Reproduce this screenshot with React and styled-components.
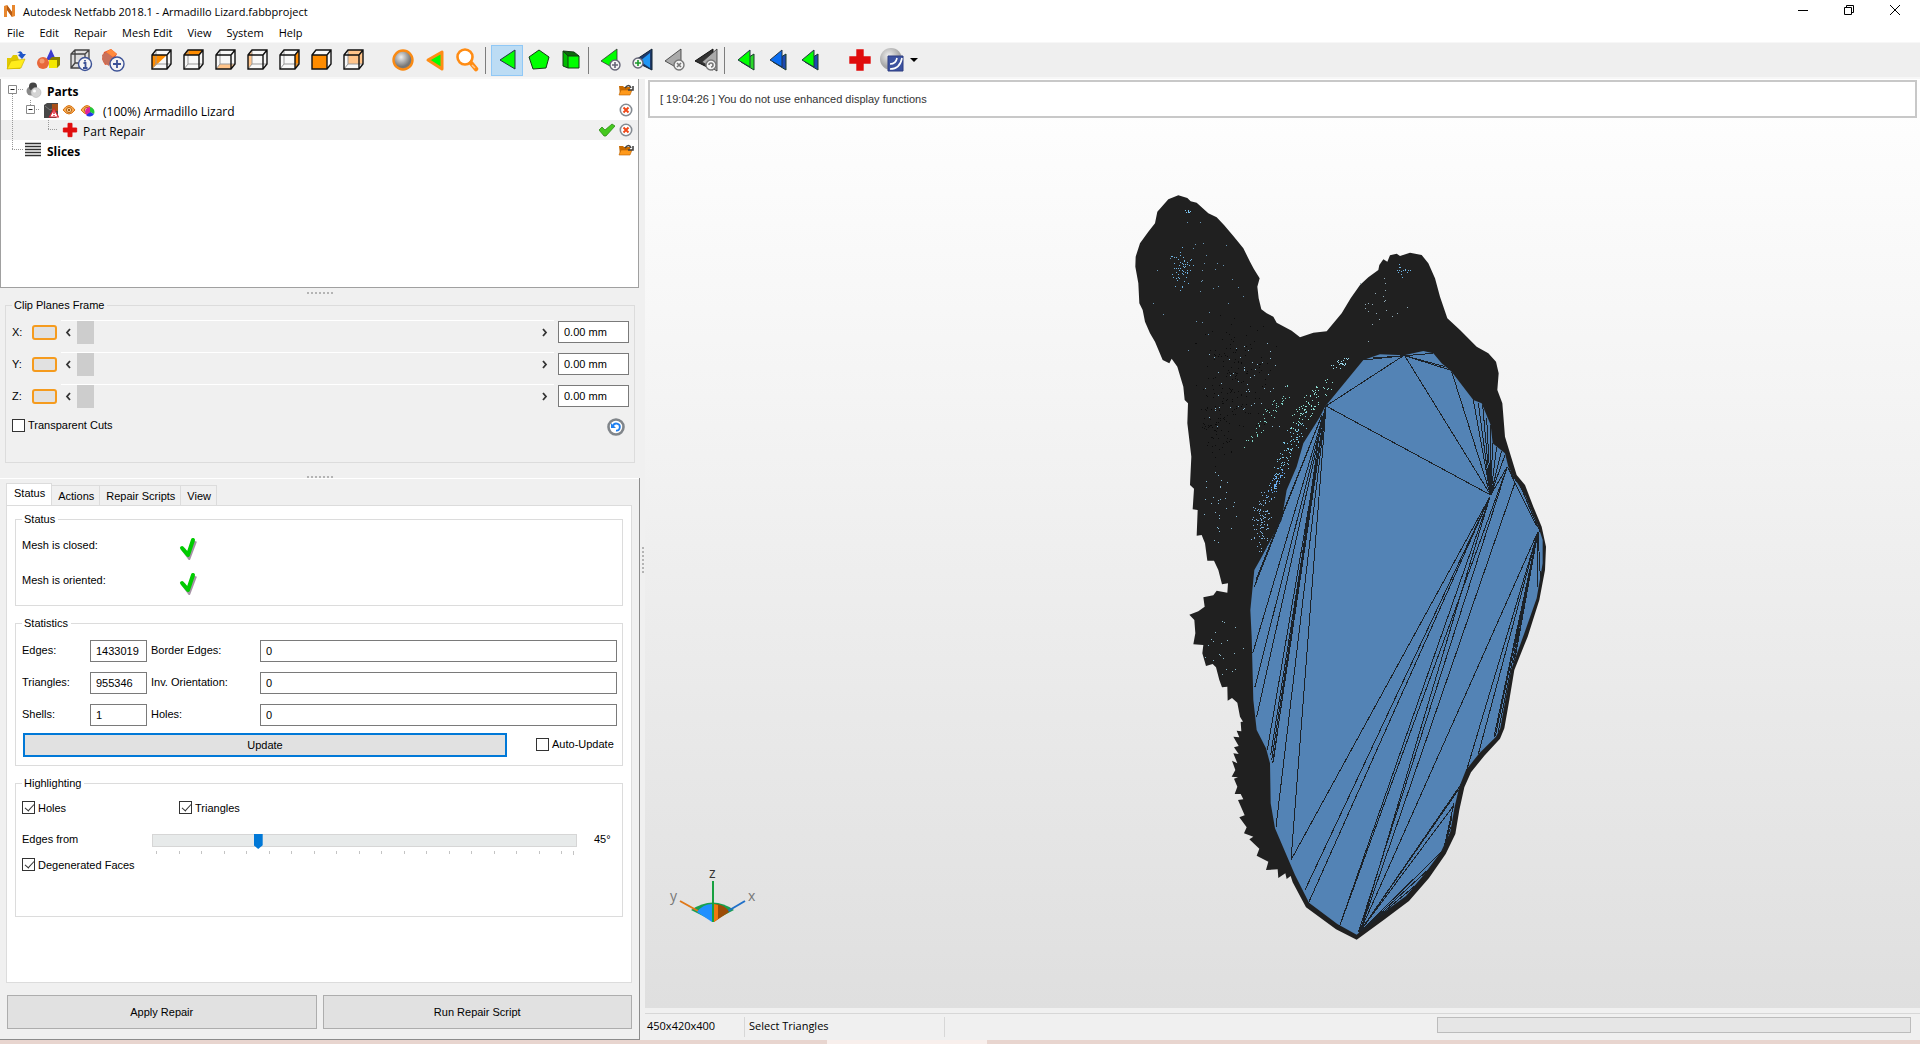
import React, { useState } from "react";
import styled, { createGlobalStyle, css } from "styled-components";

const GlobalStyle = createGlobalStyle`
  * {
    box-sizing: border-box;
  }
  body {
    margin: 0;
    background: #f0f0f0;
    color: #000;
    font-family: "Liberation Sans", Arial, sans-serif;
    font-size: 11px;
    line-height: 14px;
  }
  button, input {
    font: inherit;
    color: inherit;
  }
`;

const uiFont = `"Open Sans", "Noto Sans", sans-serif`;

/* ---------- window ---------- */

const Window = styled.div`
  display: flex;
  flex-direction: column;
  min-height: 100vh;
`;

const TitleBar = styled.header`
  display: flex;
  align-items: center;
  height: 22px;
  padding-left: 3px;
  background: #fff;
  font-family: ${uiFont};
  font-size: 11px;
`;

const Title = styled.h1`
  flex: 1;
  margin: 0 0 0 6px;
  padding-top: 2px;
  font-size: 11px;
  font-weight: 400;
`;

const WindowButton = styled.button`
  display: flex;
  align-items: center;
  justify-content: center;
  width: 46px;
  height: 22px;
  padding: 0 4px 2px 0;
  border: 0;
  background: none;
`;

const MenuBar = styled.nav`
  display: flex;
  gap: 1px;
  height: 20px;
  background: #fff;
`;

const MenuItem = styled.button`
  padding: 1px 7px 0;
  border: 0;
  background: none;
  font-family: ${uiFont};
  font-size: 11px;
  line-height: 19px;
`;

const Toolbar = styled.div`
  display: flex;
  align-items: center;
  height: 37px;
  padding-left: 1px;
  border: solid #f7f7f7;
  border-width: 1px 0 2px;
  background: #efefef;
`;

const Tool = styled.button`
  display: flex;
  align-items: center;
  justify-content: center;
  width: ${(p) => p.$width || 32}px;
  height: 31px;
  padding: 0;
  border: 1px solid ${(p) => (p.$active ? "#90c8f6" : "transparent")};
  background: ${(p) => (p.$active ? "#bcdcf4" : "none")};
`;

const Gap = styled.span`
  width: ${(p) => p.$width}px;
`;

const Separator = styled.span`
  width: 1px;
  height: 27px;
  margin: 0 ${(p) => p.$after || 0}px 0 ${(p) => p.$before || 0}px;
  background: #7d7d7d;
`;

const Body = styled.div`
  display: flex;
  flex: 1;
`;

/* ---------- side bar ---------- */

const SideBar = styled.aside`
  display: flex;
  flex-direction: column;
  flex: 0 0 640px;
`;

const Tree = styled.ul`
  height: 209px;
  margin: 0 1px 0 0;
  padding: 1px 0 0;
  border: solid #a0a0a0;
  border-width: 0 1px 1px 1px;
  background: #fff;
  list-style: none;
  font-family: ${uiFont};
  font-size: 12px;
`;

const TreeRow = styled.li`
  display: flex;
  align-items: center;
  height: 20px;
  padding-right: 4px;
  background: ${(p) => (p.$selected ? "#f0f0f0" : "none")};
  font-weight: ${(p) => (p.$root ? 700 : 400)};
`;

const TreeLabel = styled.span`
  flex: 1;
  padding: 4px 0 0 ${(p) => p.$indent || 5}px;
`;

const Expander = styled.button`
  padding: 0;
  border: 0;
  background: none;
  height: 20px;
`;

const Connector = styled.svg`
  display: block;
`;

const IconButton = styled.button`
  display: flex;
  margin-left: ${(p) => p.$left || 2}px;
  padding: 0;
  border: 0;
  background: none;
`;

const Splitter = styled.div`
  display: flex;
  justify-content: center;
  align-items: ${(p) => p.$align || "center"};
  gap: 2px;
  height: ${(p) => p.$size}px;
`;

const VerticalSplitter = styled.div`
  display: flex;
  flex-direction: column;
  align-items: center;
  justify-content: center;
  gap: 2px;
  width: 5px;
`;

const Dot = styled.span`
  width: 2px;
  height: 2px;
  background: #b4b4b4;
`;

const ClipPanel = styled.section`
  padding: 0 5px;
`;

const Group = styled.fieldset`
  min-width: 0;
  margin: 0;
  padding: ${(p) => p.$pad};
  border: 1px solid #dcdcdc;

  & + & {
    margin-top: 10px;
  }
`;

const Legend = styled.legend`
  padding: 0 3px 0 2px;
  height: 14px;
`;

const ClipRow = styled.div`
  display: flex;
  align-items: center;
  height: 32px;
`;

const AxisLabel = styled.label`
  width: 20px;
`;

const PlaneToggle = styled.button`
  width: 25px;
  height: 15px;
  margin-right: 4px;
  padding: 0;
  border: 2px solid #f59b1e;
  border-radius: 3px;
  background: #e1e1e1;
`;

const ScrollTrack = styled.div`
  display: flex;
  flex: 1;
  height: 24px;
  margin-right: 4px;
  border-top: 1px solid #fff;
`;

const ArrowButton = styled.button`
  width: 16px;
  padding: 0 2px 0 0;
  border: 0;
  background: none;
`;

const ScrollRange = styled.input`
  appearance: none;
  flex: 1;
  min-width: 0;
  height: 23px;
  margin: 0;
  background: none;

  &::-webkit-slider-thumb {
    appearance: none;
    width: 17px;
    height: 23px;
    background: #cdcdcd;
  }
`;

const Field = styled.input`
  width: 100%;
  height: 22px;
  min-width: 0;
  padding: 0 5px;
  border: 1px solid #7a7a7a;
  background: #fff;
`;

const ClipField = styled(Field)`
  width: 71px;
`;

const ClipFooter = styled.div`
  display: flex;
  align-items: flex-start;
  justify-content: space-between;
  height: 32px;
  padding: 6px 4px 0 0;
`;

const CheckLabel = styled.label`
  display: flex;
  align-items: center;
  gap: 3px;
  min-width: ${(p) => p.$width || 0}px;
  white-space: nowrap;
`;

const CheckBox = styled.input`
  appearance: none;
  flex: none;
  width: 13px;
  height: 13px;
  margin: 0;
  border: 1px solid #333;
  background: #fff;

  &:checked::after {
    content: "";
    display: block;
    width: 4px;
    height: 8px;
    margin: 0 0 0 4px;
    border: solid #333;
    border-width: 0 1px 1px 0;
    transform: rotate(42deg);
  }
`;

const RepairPanel = styled.section`
  display: flex;
  flex-direction: column;
  flex: 1;
  padding: 5px 7px 10px 6px;
  border: solid #8c8c8c;
  border-width: 0 1px 1px 0;
  box-shadow: inset 0 1px #fff;
`;

const Tabs = styled.div`
  display: flex;
  align-items: flex-end;
  height: 23px;
  margin-bottom: -1px;
`;

const Tab = styled.button`
  height: ${(p) => (p.$active ? 23 : 21)}px;
  padding: 1px 5px 0 6px;
  border: 1px solid #dcdcdc;
  border-left-width: ${(p) => (p.$first ? 1 : 0)}px;
  background: #f0f0f0;

  ${(p) =>
    p.$active &&
    css`
      padding: 0 6px 3px 7px;
      border-bottom-color: #fff;
      background: #fff;
    `}
`;

const TabPanel = styled.div`
  flex: 1;
  padding: 6px 8px 0;
  border: 1px solid #dcdcdc;
  background: #fff;
`;

const StatusRow = styled.div`
  display: flex;
  align-items: center;
  height: 35px;

  span {
    width: 156px;
    padding-bottom: 6px;
  }
`;

const StatsGrid = styled.div`
  display: grid;
  grid-template-columns: 68px 57px 113px 1fr;
  grid-auto-rows: 32px;
  align-items: center;

  label {
    padding-bottom: 2px;
  }
  label:nth-of-type(even) {
    padding-left: 4px;
  }
`;

const UpdateRow = styled.div`
  display: flex;
  align-items: center;
  gap: 29px;
  height: 28px;
  padding-left: 1px;

  label {
    padding-bottom: 2px;
  }
`;

const UpdateButton = styled.button`
  flex: 1;
  height: 24px;
  padding: 0;
  border: 2px solid #0078d7;
  background: #e1e1e1;
`;

const HighlightRow = styled.div`
  display: flex;
  align-items: center;
  height: ${(p) => p.$height}px;
`;

const EdgeLabel = styled.label`
  width: 130px;
`;

const AngleSlider = styled.div`
  flex: 1;
  padding-top: 11px;
`;

const AngleRange = styled.input`
  appearance: none;
  display: block;
  width: 100%;
  height: 13px;
  margin: 0;
  border: 1px solid #d6d6d6;
  background: #e7eaea;

  &::-webkit-slider-thumb {
    appearance: none;
    width: 9px;
    height: 15px;
    margin-top: 2px;
    background: #0078d7;
    clip-path: polygon(0 0, 100% 0, 100% 75%, 50% 100%, 0 75%);
  }
`;

const Ticks = styled.div`
  display: flex;
  height: 4px;
  margin: 4px 3px 0 4px;
  border-right: 1px solid #c4c4c4;
`;

const Tick = styled.span`
  flex: ${(p) => p.$span};
  height: 3px;
  border-left: 1px solid #c4c4c4;
`;

const AngleValue = styled.output`
  width: 40px;
  padding-left: 17px;
`;

const Actions = styled.div`
  display: flex;
  gap: 6px;
  margin: 12px 0 0 1px;
`;

const ActionButton = styled.button`
  flex: 1;
  height: 34px;
  border: 1px solid #adadad;
  background: #e1e1e1;
`;

/* ---------- viewport ---------- */

const Main = styled.main`
  display: flex;
  flex-direction: column;
  flex: 1;
  min-width: 0;
`;

const Viewport = styled.section`
  position: relative;
  display: flex;
  flex: 1;
  flex-direction: column;
  padding: 1px 3px 0;
  background: linear-gradient(#fff 0, #fdfdfd 6%, #dfdfdf 100%);
`;

const Message = styled.p`
  margin: 0;
  padding: 10px;
  border: 2px solid #c8c8c8;
  background: #fff;
  color: #333;
`;

const MeshCanvas = styled.svg`
  position: absolute;
  inset: 0;
  width: 100%;
  height: 100%;
`;

const AxisGizmo = styled.svg`
  position: absolute;
  left: 20px;
  bottom: 79px;
  font-family: ${uiFont};
  font-size: 14px;
`;

const StatusBar = styled.footer`
  display: flex;
  align-items: center;
  height: 27px;
  margin-top: 5px;
  border-top: 1px solid #d7d7d7;
  font-family: ${uiFont};
  font-size: 11px;
`;

const StatusCell = styled.span`
  width: ${(p) => p.$width}px;
  height: 20px;
  padding: 2px 0 0 ${(p) => p.$left}px;
  border-right: 1px solid #d7d7d7;
`;

const Progress = styled.div`
  flex: 0 0 474px;
  height: 16px;
  margin: 0 9px 4px auto;
  border: 1px solid #bcbcbc;
  background: #e6e6e6;
`;

const Desktop = styled.div`
  display: flex;
  justify-content: center;
  height: 4px;
  background: #e8d5cf;

  span {
    width: 160px;
    margin-right: 106px;
    background: #f8efec;
  }
`;

/* ---------- icons ---------- */

const Svg = ({ size = 24, children }) => (
  <svg width={size} height={size} viewBox={`0 0 ${size} ${size}`} aria-hidden="true">
    {children}
  </svg>
);

const cubeFaces = {
  half: { d: "M2 7H17L2 21Z", fill: "#ff8c00" },
  top: { d: "M2 7L6 2H21L17 7Z", fill: "#ff8c00" },
  bottom: { d: "M2 21L6 16H21L17 21Z", fill: "#ffc48a" },
  left: { d: "M2 7L6 2V16L2 21Z", fill: "#ffc48a" },
  right: { d: "M17 7L21 2V16L17 21Z", fill: "#ff8c00" },
  front: { d: "M2 7H17V21H2Z", fill: "#ff8c00" },
  back: { d: "M6 2H21V16H6Z", fill: "#ffc48a" },
};

const Cube = ({ face }) => (
  <Svg>
    <path d="M2 7L6 2H21V16L17 21H2Z" fill="#f8f8f8" />
    <path {...cubeFaces[face]} />
    {face !== "front" && <path d="M6 2V16H21M6 16L2 21" fill="none" stroke="#999" />}
    <path d="M2 7L6 2H21V16L17 21H2ZM2 7H17V21M17 7L21 2" fill="none" stroke="#111" strokeWidth="1.4" />
  </Svg>
);

const Badge = ({ x, y, r = 5, color, children }) => (
  <g transform={`translate(${x} ${y})`} fill="none" stroke={color}>
    <circle r={r} fill="#f4f4f4" strokeWidth="1.4" />
    {children}
  </g>
);

const OpenFolder = () => (
  <Svg>
    <path d="M2 10H6L8 7H12L14 12L18 13L15 21H2Z" fill="#e0c800" />
    <path d="M6 13L20 11L16 20L2 21Z" fill="#ffec1c" stroke="#c4aa00" strokeWidth="0.6" />
    <path d="M12 5Q16 1 18 6L21 6L17 11L13 7L15 6Q14 4 12 5Z" fill="#1f55c8" />
  </Svg>
);

const Shapes = () => (
  <Svg>
    <path d="M14 1L19 12H9Z" fill="#3a3ad0" />
    <circle cx="6" cy="15" r="6" fill="#e8673a" />
    <circle cx="5" cy="13" r="2.5" fill="#f59a70" />
    <path d="M12 12L15 9H23V17L20 20H12Z" fill="#8a8200" />
    <path d="M12 12H20V20H12Z" fill="#f4e800" />
  </Svg>
);

const CubeInfo = () => (
  <Svg>
    <path d="M2 6L6 2H20V15L16 20H2ZM2 6H16V20M16 6L20 2M6 2V15H18M6 15L2 20" fill="#ddd" stroke="#444" strokeWidth="1.3" />
    <Badge x={16} y={16} r={6.5} color="#3c5296">
      <path d="M-1.5 -1H0.5V4M-2 4H2.5M0 -4V-2.4" strokeWidth="1.8" />
    </Badge>
  </Svg>
);

const PartAdd = () => (
  <Svg>
    <path d="M3 4L10 1L16 6L11 15L4 17L1 11Z" fill="#e8542a" />
    <path d="M1 7L5 4L12 9L8 18L2 14Z" fill="#c8705a" />
    <path d="M5 4L10 1L16 6L12 9Z" fill="#ff8a3c" />
    <Badge x={16} y={16} r={7} color="#3c5296">
      <path d="M-4 0H4M0 -4V4" strokeWidth="1.8" />
    </Badge>
  </Svg>
);

const Sphere = () => (
  <Svg>
    <defs>
      <radialGradient id="ball" cx="0.4" cy="0.35">
        <stop offset="0" stopColor="#eee" />
        <stop offset="1" stopColor="#777" />
      </radialGradient>
    </defs>
    <circle cx="12" cy="12" r="9.5" fill="url(#ball)" stroke="#f98a14" strokeWidth="2.4" />
  </Svg>
);

const PlayTriangle = () => (
  <Svg>
    <path d="M5 12L19 4V21Z" fill="#0f0" stroke="#ff8c14" strokeWidth="3" strokeLinejoin="round" />
  </Svg>
);

const Magnifier = () => (
  <Svg>
    <circle cx="10" cy="9" r="7.5" fill="#fff" stroke="#ff8c14" strokeWidth="2.6" />
    <path d="M16 15L21 21" stroke="#ff8c14" strokeWidth="4.5" strokeLinecap="round" />
    <path d="M17 17L20 20" stroke="#ffc890" strokeWidth="1.5" />
  </Svg>
);

const Triangle = ({ fill, shadow }) => (
  <Svg>
    {shadow && <path d="M7 14L20 6V22Z" fill={shadow} stroke="#1a3a2a" />}
    <path d={shadow ? "M4 12L16 2V19Z" : "M5 12L20 2V21Z"} fill={fill} stroke="#234" strokeWidth="1" />
  </Svg>
);

const BadgeTriangle = ({ fill, color, symbol, double }) => (
  <Svg>
    {double && <path d="M1 13L19 1V22Z" fill="#333" stroke="#111" />}
    <path d={double ? "M8 14L23 1V23Z" : "M3 13L19 1V22Z"} fill={fill} stroke="#333" strokeWidth="0.8" />
    <Badge x={17} y={17} color={color}>
      <path d={symbol} strokeWidth="1.6" />
    </Badge>
  </Svg>
);

const BlueExpand = () => (
  <Svg>
    <path d="M4 13L22 1V22Z" fill="#1c3a6c" stroke="#123" />
    <path d="M10 13L20 5V20Z" fill="#2196f3" />
    <Badge x={8} y={15} color="#667">
      <path d="M-3 0H3M0 -3V3" stroke="#1a9a2a" strokeWidth="1.6" />
    </Badge>
  </Svg>
);

const RedCross = ({ size = 24 }) => (
  <svg width={size} height={size} viewBox="0 0 24 24" aria-hidden="true">
    <path d="M9 2H15V9H22V15H15V22H9V15H2V9H9Z" fill="#e00d0d" stroke="#e00d0d" strokeWidth="1.4" />
  </svg>
);

const SphereTool = () => (
  <Svg>
    <circle cx="11" cy="11" r="11" fill="url(#ball)" opacity="0.6" />
    <path d="M8 8H23V23H8Z" fill="#3c52a0" stroke="#2c3c80" />
    <path d="M10 16Q16 16 17 10M10 21Q20 21 22 10" fill="none" stroke="#fff" strokeWidth="1.6" />
  </Svg>
);

const FolderIcon = () => (
  <Svg size={16}>
    <path d="M1 4H5L6 5H12V13H2Z" fill="#c86a00" />
    <path d="M3 8H14L12 13H1Z" fill="#ff9a1c" stroke="#b86000" strokeWidth="0.6" />
    <path d="M7 6Q11 1 13 6M15 4V8H10" fill="none" stroke="#444" strokeWidth="1.6" />
  </Svg>
);

const RemoveIcon = () => (
  <Svg size={16}>
    <circle cx="8" cy="8" r="5.7" fill="#fff" stroke="#858b92" strokeWidth="1.6" />
    <path d="M5.500 5.500L10.500 10.500M10.500 5.500L5.500 10.500" stroke="#f04818" strokeWidth="2" />
  </Svg>
);

const AcceptIcon = () => (
  <Svg size={16}>
    <path d="M0 8L3 5L6 8L13 2L16 4L7 14H5Z" fill="#45c81e" stroke="#2c8a18" strokeWidth="0.8" />
  </Svg>
);

const PartsIcon = () => (
  <Svg size={16}>
    <circle cx="5" cy="9" r="4.5" fill="#888" />
    <circle cx="7" cy="4.5" r="4" fill="#444" />
    <circle cx="10" cy="10.5" r="5" fill="#d4d4d4" stroke="#aaa" strokeWidth="0.5" />
    <circle cx="8.5" cy="9" r="1.5" fill="#fff" />
  </Svg>
);

const PartIcon = () => (
  <Svg size={16}>
    <path d="M1 3L4 1H15V14L13 16H1Z" fill="#484848" />
    <path d="M2 4L7 8L9 7" fill="none" stroke="#777" />
    <path d="M9 2H15V9H9Z" fill="#a85018" />
    <path d="M11 7L15.500 15H6.500Z" fill="#fff" stroke="#e02030" strokeWidth="1.2" />
    <path d="M11 9V12M11 13V14" stroke="#e02030" strokeWidth="1.4" />
  </Svg>
);

const EyeIcon = ({ colored }) => (
  <Svg size={16}>
    <path d="M2 8Q8 -1 14 8Q8 16 2 8Z" fill="#f8a850" stroke="#d87818" />
    <circle cx="8" cy="8" r="2.6" fill="#ffdca8" stroke="#b86818" />
    <circle cx="8" cy="8" r="1.2" fill="#a85808" />
    {colored && (
      <>
        <path d="M11 10V5A5 5 0 0 1 15 12Z" fill="#22c83a" />
        <path d="M11 10L15 12A5 5 0 0 1 7 13Z" fill="#2038e8" />
        <path d="M11 10L7 13A5 5 0 0 1 11 5Z" fill="#e020a0" />
      </>
    )}
  </Svg>
);

const SlicesIcon = () => (
  <Svg size={16}>
    <path d="M0 1.500H16M0 4.500H16M0 7.500H16M0 10.500H16M0 13.500H16" stroke="#333" strokeWidth="1.6" />
  </Svg>
);

const ResetIcon = () => (
  <Svg size={18}>
    <circle cx="9" cy="9" r="7.5" fill="#fff" stroke="#80858a" strokeWidth="2.6" />
    <path d="M6 8A3.500 3.500 0 1 1 9 12.500" fill="none" stroke="#2080f0" strokeWidth="1.8" />
    <path d="M4 5V10H9Z" fill="#2080f0" />
  </Svg>
);

const StatusCheck = () => (
  <Svg size={24}>
    <path d="M5 13L11 21L17 5" fill="none" stroke="#6a4a6a" strokeWidth="4" opacity="0.6" />
    <path d="M4 12L10 19L15 4" fill="none" stroke="#0c0" strokeWidth="4" strokeLinejoin="round" strokeLinecap="round" />
  </Svg>
);

const TreeLines = ({ width, d, box }) => (
  <Connector width={width} height="20" aria-hidden="true">
    <path d={d} fill="none" stroke="#999" strokeDasharray="1 1" />
    {box && (
      <g fill="#fff" stroke="#888">
        <path d={`M${box - 4} 5.500h8v8h-8Z`} />
        <path d={`M${box - 2} 9.500h4`} stroke="#222" />
      </g>
    )}
  </Connector>
);

/* ---------- mesh ---------- */

const bodyOutline = `M235 76L262 84 272 94 290 98 325 130 350 142 372 165 400 198 430 235 450 275 462 298 479 325
472 350 476 385 484 418 500 430 520 440 530 458 575 482 600 502 640 488 680 484 725 430 752 385 780 345 805 322 835 300
838 285 850 268 862 275 870 256 890 251 900 258 930 248 965 255 985 280 1005 325 1020 380 1042 445 1080 480 1130 530
1165 550 1188 575 1196 610 1192 660 1207 700 1215 800 1230 850 1250 915 1275 945 1300 1010 1325 1070 1338 1130 1335 1200
1318 1290 1283 1400 1243 1500 1228 1590 1213 1675 1200 1706 1153 1757 1113 1807 1093 1852 1078 1920 1066 1992 1037 2052
987 2124 927 2193 852 2249 770 2309 708 2278 618 2212 578 2137 572 2118 560 2127 556 2110 535 2124 533 2098 498 2100
505 2075 470 2057 478 2036 448 2008 460 2000 432 1990 440 1972 418 1942 434 1936 414 1890 430 1888 422 1872 404 1872
412 1850 402 1826 414 1822 395 1820 406 1800 396 1772 412 1780 400 1750 416 1752 402 1732 416 1728 400 1700 418 1702
410 1682 424 1684 422 1656 434 1654 430 1634 444 1680 420 1640 412 1598 396 1584 383 1592 382 1550 366 1552 358 1530
348 1492 338 1482 318 1488 307 1450 310 1425 280 1423 286 1390 283 1350 268 1334 295 1324 314 1310 310 1282 340 1276
350 1262 382 1268 384 1240 366 1243 355 1200 342 1172 322 1172 315 1120 305 1095 290 1097 293 1020 278 1018 282 956
270 945 274 860 262 760 264 700 254 690 250 650 232 590 215 566 208 580 188 570 165 515 150 490 135 455 128 420 118 400
115 340 106 290 107 260 120 220 145 185 165 160 172 125 205 88Z`;

const cutOutline = `M790 570L840 553 912 556 970 543 1000 550 1025 580 1055 605 1120 690 1145 700 1172 765 1178 820
1215 850 1225 890 1250 935 1275 975 1315 1070 1328 1110 1328 1180 1310 1285 1273 1390 1233 1500 1216 1590 1201 1675
1188 1700 1138 1750 1098 1800 1078 1850 1064 1910 1051 1985 1023 2045 973 2113 918 2178 843 2233 770 2294 712 2262
627 2198 585 2115 525 1975 512 1900 510 1780 498 1735 470 1680 460 1590 455 1400 451 1320 463 1200 480 1170 545 1050
560 960 590 890 610 820 660 740 675 710Z`;

// each fan is an apex and the far ends of the edges that leave it
const fans = [
  [[678, 708], [[912, 556], [1172, 975], [573, 2070], [528, 1970], [518, 1780], [515, 1770], [512, 1755], [502, 1740], [470, 1640], [465, 1550], [458, 1450]]],
  [[666, 735], [[463, 1250], [520, 1775], [468, 1230]]],
  [[914, 557], [[790, 570], [820, 564], [1172, 975], [1000, 550], [1050, 600], [1035, 590]]],
  [[1172, 975], [[1055, 605], [1120, 690], [1135, 700], [1148, 706], [1160, 745], [1172, 765], [1178, 820], [1190, 830], [1205, 842], [1215, 855], [1222, 890]]],
  [[1170, 980], [[573, 2070], [615, 2160], [625, 2200], [718, 2270], [780, 2285]]],
  [[1222, 890], [[719, 2268], [776, 2285], [1250, 935]]],
  [[1245, 938], [[780, 2285], [1310, 1068], [1222, 890]]],
  [[1262, 950], [[1320, 1085], [1300, 1040]]],
  [[1314, 1085], [[780, 2285], [1100, 1800], [1135, 1752], [1182, 1700], [1186, 1698], [1195, 1685], [1240, 1480], [1246, 1460], [1313, 1250], [1322, 1240]]],
  [[778, 2287], [[1085, 1840], [1075, 1860], [1062, 1905], [1030, 2040], [1000, 2085], [960, 2135], [920, 2180]]],
  [[1030, 2042], [[1062, 1900], [1052, 1970], [1056, 1940]]],
];

// visible facets: centre, spread, tilt, how many, colour
const speckGroups = [
  [245, 300, 35, 70, 0, 56, "#6fb4e4"],
  [265, 125, 12, 8, 0, 8, "#7cc4f0"],
  [300, 330, 170, 230, 0, 30, "#6a95b4"],
  [910, 300, 30, 25, 0, 16, "#6fb4e4"],
  [850, 400, 110, 120, 0, 22, "#93acb8"],
  [420, 640, 150, 150, 0, 50, "#8cb8d0"],
  [630, 700, 32, 110, 38, 80, "#8fe0d4"],
  [565, 840, 28, 140, 22, 90, "#7cc8e8"],
  [525, 940, 16, 60, 25, 60, "#68acf0"],
  [485, 1050, 32, 100, 5, 100, "#7cb0dc"],
  [505, 740, 26, 130, 35, 50, "#80d4c8"],
  [725, 580, 40, 18, -20, 30, "#9cdcf0"],
  [360, 1000, 60, 130, 0, 30, "#84b8d4"],
  [370, 1430, 70, 120, 0, 20, "#8cb8c8"],
];

const darkGroups = [[400, 620, 130, 200, 0, 150, "#0c0c0c"], [350, 780, 60, 120, 0, 60, "#0c0c0c"]];

const makeSpecks = (groups) => {
  let seed = 77;
  const next = () => {
    seed = (seed * 16807) % 2147483647;
    return seed / 2147483647;
  };
  return groups.flatMap(([cx, cy, w, h, tilt, count, fill]) => {
    const angle = (tilt * Math.PI) / 180;
    return Array.from({ length: count }, () => {
      const dx = (next() + next() - 1) * w;
      const dy = (next() + next() - 1) * h;
      return {
        x: Math.round((cx + dx * Math.cos(angle) - dy * Math.sin(angle)) / 3) * 3,
        y: Math.round((cy + dx * Math.sin(angle) + dy * Math.cos(angle)) / 3) * 3,
        fill,
      };
    });
  });
};

const specks = makeSpecks([...darkGroups, ...speckGroups]);

const Mesh = () => (
  <MeshCanvas viewBox="-1365 -273 3825 2787" role="img" aria-label="Armadillo Lizard mesh">
    <path d={bodyOutline} fill="#202020" />
    {specks.map((s, i) => (
      <rect key={i} x={s.x} y={s.y} width="3" height="3" fill={s.fill} />
    ))}
    <path d={cutOutline} fill="#5383b5" />
    <path
      d={fans.map(([[x, y], ends]) => ends.map(([ex, ey]) => `M${x} ${y}L${ex} ${ey}`).join("")).join("")}
      fill="none"
      stroke="#1c2228"
      strokeWidth="3"
      shapeRendering="crispEdges"
    />
  </MeshCanvas>
);

const Gizmo = () => (
  <AxisGizmo width="100" height="70" viewBox="0 -10 100 70" aria-hidden="true">
    <path d="M26 41Q48 26 69 41L48 52Z" fill="#18a050" />
    <path d="M15 32L33 42" stroke="#e07818" strokeWidth="2" />
    <path d="M80 32L63 42" stroke="#2070c8" strokeWidth="2" />
    <path d="M32 43Q38 35 47 35V53Z" fill="#2090ff" />
    <path d="M49 35Q60 35 64 43L49 53Z" fill="#9c4c08" />
    <path d="M49 35L53 36V50L49 53Z" fill="#f07810" />
    <path d="M48 12V53" stroke="#18a040" strokeWidth="2" />
    <text x="44" y="9" fill="#333">z</text>
    <text x="5" y="32" fill="#777">y</text>
    <text x="83" y="32" fill="#777">x</text>
  </AxisGizmo>
);

/* ---------- page ---------- */

const menu = ["File", "Edit", "Repair", "Mesh Edit", "View", "System", "Help"];
const tabs = ["Status", "Actions", "Repair Scripts", "View"];
const stats = [
  ["Edges:", "1433019", "Border Edges:", "0"],
  ["Triangles:", "955346", "Inv. Orientation:", "0"],
  ["Shells:", "1", "Holes:", "0"],
];

const dots = Array.from({ length: 7 }, (_, i) => <Dot key={i} />);

const Check = ({ label, width, checked = false }) => {
  const [on, setOn] = useState(checked);
  return (
    <CheckLabel $width={width}>
      <CheckBox type="checkbox" checked={on} onChange={() => setOn(!on)} />
      {label}
    </CheckLabel>
  );
};

const ClipPlane = ({ axis }) => {
  const [value, setValue] = useState(0);
  return (
    <ClipRow>
      <AxisLabel htmlFor={`clip-${axis}`}>{axis}:</AxisLabel>
      <PlaneToggle aria-label={`Clip ${axis}`} />
      <ScrollTrack>
        <ArrowButton aria-label="Less">
          <svg width="6" height="9"><path d="M5 1L2 4.500L5 8" fill="none" stroke="#333" strokeWidth="1.8" /></svg>
        </ArrowButton>
        <ScrollRange
          id={`clip-${axis}`}
          type="range"
          value={value}
          onChange={(e) => setValue(Number(e.target.value))}
        />
        <ArrowButton aria-label="More">
          <svg width="6" height="9"><path d="M1 1L4 4.500L1 8" fill="none" stroke="#333" strokeWidth="1.8" /></svg>
        </ArrowButton>
      </ScrollTrack>
      <ClipField aria-label={`${axis} offset`} value={`${value.toFixed(2)} mm`} readOnly />
    </ClipRow>
  );
};

export default function App() {
  const [angle, setAngle] = useState(45);

  return (
    <Window>
      <GlobalStyle />
      <TitleBar>
        <svg width="14" height="16" aria-hidden="true">
          <path d="M1 14V3L4 2L9 9V2H12V13L9 14L4 7V14Z" fill="#e8872e" />
          <path d="M4 2L9 9V14L4 7Z" fill="#b45a14" />
        </svg>
        <Title>Autodesk Netfabb 2018.1 - Armadillo Lizard.fabbproject</Title>
        <WindowButton aria-label="Minimize">
          <svg width="10" height="10"><path d="M0 5.500H10" stroke="#000" /></svg>
        </WindowButton>
        <WindowButton aria-label="Restore">
          <svg width="10" height="10"><path d="M0.500 2.500H7.500V9.500H0.500ZM2.500 2.500V0.500H9.500V7.500H7.500" fill="none" stroke="#000" /></svg>
        </WindowButton>
        <WindowButton aria-label="Close">
          <svg width="10" height="10"><path d="M0 0L10 10M10 0L0 10" stroke="#000" /></svg>
        </WindowButton>
      </TitleBar>
      <MenuBar>
        {menu.map((item) => <MenuItem key={item}>{item}</MenuItem>)}
      </MenuBar>
      <Toolbar>
        <Tool aria-label="Open"><OpenFolder /></Tool>
        <Tool aria-label="Add part"><Shapes /></Tool>
        <Tool aria-label="Part information"><CubeInfo /></Tool>
        <Tool aria-label="New analysis"><PartAdd /></Tool>
        <Gap $width={17} />
        {Object.keys(cubeFaces).map((face) => (
          <Tool key={face} aria-label={`View ${face}`}><Cube face={face} /></Tool>
        ))}
        <Gap $width={17} />
        <Tool aria-label="Center view"><Sphere /></Tool>
        <Tool aria-label="Zoom selection"><PlayTriangle /></Tool>
        <Tool aria-label="Zoom"><Magnifier /></Tool>
        <Separator $before={2} $after={5} />
        <Tool $active aria-label="Select triangles"><Triangle fill="#0f0" /></Tool>
        <Tool aria-label="Select surface">
          <Svg><path d="M12 2L22 9L19 20L6 21L2 9Z" fill="#0f0" stroke="#163a16" /></Svg>
        </Tool>
        <Tool aria-label="Select shell">
          <Svg>
            <path d="M4 3L15 4L20 8H9Z" fill="#0a6a0a" />
            <path d="M4 3L9 8V20L4 18Z" fill="#0b0" />
            <path d="M9 8H20V20H9Z" fill="#0f0" />
            <path d="M9 8H20V20H9ZM9 8L4 3V18L9 20M4 3L15 4L20 8" fill="none" stroke="#163a16" />
          </Svg>
        </Tool>
        <Separator $after={5} $before={1} />
        <Tool aria-label="Add triangle"><BadgeTriangle fill="#0f0" color="#667" symbol="M-3 0H3M0 -3V3" /></Tool>
        <Tool aria-label="Expand selection"><BlueExpand /></Tool>
        <Tool aria-label="Remove triangle"><BadgeTriangle fill="#aaa" color="#777" symbol="M-2 -2L2 2M2 -2L-2 2" /></Tool>
        <Tool aria-label="Undo selection"><BadgeTriangle double fill="#aaa" color="#777" symbol="M-2 0A2 2 0 1 1 0 2" /></Tool>
        <Separator $before={2} $after={5} />
        <Tool aria-label="Flip"><Triangle fill="#0f0" shadow="#2ad82a" /></Tool>
        <Tool aria-label="Flip selected"><Triangle fill="#0a6cf0" shadow="#1c4ab0" /></Tool>
        <Tool aria-label="Flip all"><Triangle fill="#0f0" shadow="#1c4ab0" /></Tool>
        <Gap $width={18} />
        <Tool aria-label="Repair"><RedCross /></Tool>
        <Tool aria-label="Display mode"><SphereTool /></Tool>
        <Tool $width={12} aria-label="More display modes">
          <svg width="8" height="4"><path d="M0 0H8L4 4Z" /></svg>
        </Tool>
      </Toolbar>

      <Body>
        <SideBar>
          <Tree>
            <TreeRow $root>
              <Expander aria-label="Collapse Parts"><TreeLines width={25} d="M11.500 10V20M11 9.500H22" box={11.5} /></Expander>
              <PartsIcon />
              <TreeLabel>Parts</TreeLabel>
              <IconButton aria-label="Open part"><FolderIcon /></IconButton>
            </TreeRow>
            <TreeRow>
              <Expander aria-label="Collapse part"><TreeLines width={42} d="M11.500 0V20M29.500 0V10M29 9.500H39" box={29.5} /></Expander>
              <PartIcon />
              <IconButton aria-label="Visibility"><EyeIcon /></IconButton>
              <IconButton aria-label="Color"><EyeIcon colored /></IconButton>
              <TreeLabel $indent={8}>(100%) Armadillo Lizard</TreeLabel>
              <IconButton aria-label="Remove part"><RemoveIcon /></IconButton>
            </TreeRow>
            <TreeRow $selected>
              <TreeLines width={61} d="M11.500 0V20M47.500 0V10M47 9.500H57" />
              <RedCross size={16} />
              <TreeLabel>Part Repair</TreeLabel>
              <IconButton aria-label="Apply"><AcceptIcon /></IconButton>
              <IconButton $left={3} aria-label="Remove repair"><RemoveIcon /></IconButton>
            </TreeRow>
            <TreeRow $root>
              <TreeLines width={24} d="M11.500 0V10M11 9.500H22" />
              <SlicesIcon />
              <TreeLabel $indent={6}>Slices</TreeLabel>
              <IconButton aria-label="Open slices"><FolderIcon /></IconButton>
            </TreeRow>
          </Tree>
          <Splitter $size={10}>{dots}</Splitter>

          <ClipPanel>
            <Group $pad="4px 5px 18px 6px">
              <Legend>Clip Planes Frame</Legend>
              {["X", "Y", "Z"].map((axis) => <ClipPlane key={axis} axis={axis} />)}
              <ClipFooter>
                <Check label="Transparent Cuts" />
                <IconButton aria-label="Reset"><ResetIcon /></IconButton>
              </ClipFooter>
            </Group>
          </ClipPanel>
          <Splitter $size={15} $align="flex-end">{dots}</Splitter>

          <RepairPanel>
            <Tabs role="tablist">
              {tabs.map((tab, i) => (
                <Tab key={tab} role="tab" aria-selected={i === 0} $active={i === 0} $first={i === 0}>{tab}</Tab>
              ))}
            </Tabs>
            <TabPanel>
              <Group $pad="4px 6px 5px">
                <Legend>Status</Legend>
                <StatusRow><span>Mesh is closed:</span><StatusCheck /></StatusRow>
                <StatusRow><span>Mesh is oriented:</span><StatusCheck /></StatusRow>
              </Group>
              <Group $pad="5px 5px 6px 6px">
                <Legend>Statistics</Legend>
                <StatsGrid>
                  {stats.map(([left, count, right, total]) => (
                    <React.Fragment key={left}>
                      <label htmlFor={left}>{left}</label>
                      <Field id={left} value={count} readOnly />
                      <label htmlFor={right}>{right}</label>
                      <Field id={right} value={total} readOnly />
                    </React.Fragment>
                  ))}
                </StatsGrid>
                <UpdateRow>
                  <UpdateButton>Update</UpdateButton>
                  <Check label="Auto-Update" width={81} />
                </UpdateRow>
              </Group>
              <Group $pad="3px 5px 43px 6px">
                <Legend>Highlighting</Legend>
                <HighlightRow $height={29}>
                  <Check label="Holes" width={157} checked />
                  <Check label="Triangles" checked />
                </HighlightRow>
                <HighlightRow $height={34}>
                  <EdgeLabel htmlFor="edge-angle">Edges from</EdgeLabel>
                  <AngleSlider>
                    <AngleRange
                      id="edge-angle"
                      type="range"
                      max="185"
                      value={angle}
                      onChange={(e) => setAngle(Number(e.target.value))}
                    />
                    <Ticks>
                      {Array.from({ length: 19 }, (_, i) => <Tick key={i} $span={i < 18 ? 2 : 1} />)}
                    </Ticks>
                  </AngleSlider>
                  <AngleValue htmlFor="edge-angle">{angle}°</AngleValue>
                </HighlightRow>
                <HighlightRow $height={17}>
                  <Check label="Degenerated Faces" checked />
                </HighlightRow>
              </Group>
            </TabPanel>
            <Actions>
              <ActionButton>Apply Repair</ActionButton>
              <ActionButton>Run Repair Script</ActionButton>
            </Actions>
          </RepairPanel>
        </SideBar>

        <VerticalSplitter>{dots}</VerticalSplitter>

        <Main>
          <Viewport>
            <Message>[ 19:04:26 ] You do not use enhanced display functions</Message>
            <Mesh />
            <Gizmo />
          </Viewport>
          <StatusBar>
            <StatusCell $width={100} $left={2}>450x420x400</StatusCell>
            <StatusCell $width={200} $left={4}>Select Triangles</StatusCell>
            <Progress />
          </StatusBar>
        </Main>
      </Body>
      <Desktop><span /></Desktop>
    </Window>
  );
}
